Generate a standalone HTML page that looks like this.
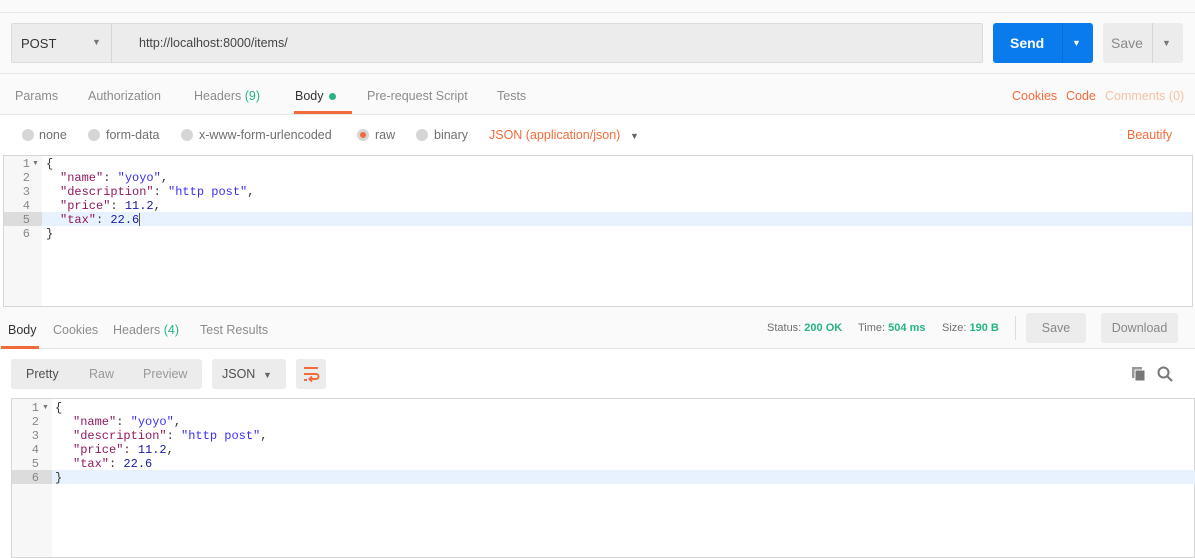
<!DOCTYPE html>
<html><head><style>
*{margin:0;padding:0;box-sizing:border-box}
body{width:1195px;height:557px;background:#fff;font-family:"Liberation Sans",sans-serif;font-size:12px;color:#505050;position:relative;overflow:hidden}
.a{position:absolute}
.mono{font-family:"Liberation Mono",monospace;font-size:12px;white-space:pre}
.k{color:#92185f}.s{color:#3b2ff5}.n{color:#1a1aa6}.p{color:#333}
.tab{position:absolute;top:89px;color:#8c8c8c;font-size:12.5px}
.rb{position:absolute;top:129px;width:12px;height:12px;border-radius:50%;background:#d6d6d6}
.rl{position:absolute;top:128px;color:#707070;font-size:12.5px}
.i{display:inline-block;width:14px}
.i2{display:inline-block;width:18px}
</style></head><body>
<div class="a" style="left:0;top:0;width:1195px;height:115px;background:#fafafa"></div>
<div class="a" style="left:0;top:12px;width:1195px;height:1px;background:#e6e6e6"></div>
<div class="a" style="left:11px;top:23px;width:972px;height:40px;background:#ececec;border:1px solid #dcdcdc;border-radius:2px"></div>
<div class="a" style="left:111px;top:23px;width:1px;height:40px;background:#d6d6d6"></div>
<div class="a" style="left:21px;top:36px;font-size:13px;color:#333">POST</div>
<div class="a" style="left:92px;top:37px;font-size:9px;color:#777">▼</div>
<div class="a" style="left:139px;top:36px;font-size:12.5px;color:#444">http://localhost:8000/items/</div>
<div class="a" style="left:993px;top:23px;width:100px;height:40px;background:#097bed;border-radius:3px"></div>
<div class="a" style="left:1062px;top:23px;width:1px;height:40px;background:#0a6fd4"></div>
<div class="a" style="left:1010px;top:35px;font-size:14px;font-weight:bold;color:#fff">Send</div>
<div class="a" style="left:1072px;top:38px;font-size:9px;color:#fff">▼</div>
<div class="a" style="left:1103px;top:23px;width:80px;height:40px;background:#ececec;border-radius:3px"></div>
<div class="a" style="left:1152px;top:23px;width:1px;height:40px;background:#d6d6d6"></div>
<div class="a" style="left:1111px;top:35px;font-size:14px;color:#888">Save</div>
<div class="a" style="left:1162px;top:38px;font-size:9px;color:#777">▼</div>
<div class="a" style="left:0;top:73px;width:1195px;height:1px;background:#e6e6e6"></div>
<div class="tab" style="left:15px">Params</div>
<div class="tab" style="left:88px">Authorization</div>
<div class="tab" style="left:194px">Headers <span style="color:#26b47f">(9)</span></div>
<div class="tab" style="left:295px;color:#333">Body <span style="display:inline-block;width:7px;height:7px;border-radius:50%;background:#26b47f;margin-left:2px"></span></div>
<div class="tab" style="left:367px">Pre-request Script</div>
<div class="tab" style="left:497px">Tests</div>
<div class="a" style="left:294px;top:111px;width:58px;height:3px;background:#f26b3a"></div>
<div class="tab" style="left:1012px;color:#f26b3a">Cookies</div>
<div class="tab" style="left:1066px;color:#f26b3a">Code</div>
<div class="tab" style="left:1105px;color:#f9c0a8">Comments (0)</div>
<div class="a" style="left:0;top:114px;width:1195px;height:1px;background:#e6e6e6"></div>
<div class="a" style="left:0;top:115px;width:1195px;height:41px;background:#fff"></div>
<div class="rb" style="left:22px"></div><div class="rl" style="left:39px">none</div>
<div class="rb" style="left:88px"></div><div class="rl" style="left:106px">form-data</div>
<div class="rb" style="left:181px"></div><div class="rl" style="left:199px">x-www-form-urlencoded</div>
<div class="rb" style="left:357px;background:#f26b3a;border:3px solid #d6d6d6"></div><div class="rl" style="left:375px">raw</div>
<div class="rb" style="left:416px"></div><div class="rl" style="left:434px">binary</div>
<div class="rl" style="left:489px;color:#f26b3a">JSON (application/json)</div>
<div class="a" style="left:630px;top:131px;font-size:9px;color:#666">▼</div>
<div class="rl" style="left:1127px;color:#f26b3a">Beautify</div>
<div class="a" style="left:3px;top:155px;width:1190px;height:152px;border:1px solid #d6d6d6;background:#fff"></div>
<div class="a" style="left:4px;top:156px;width:38px;height:150px;background:#f7f7f7"></div>
<div class="a" style="left:4px;top:212px;width:38px;height:14px;background:#dcdcdc"></div>
<div class="a" style="left:42px;top:212px;width:1150px;height:14px;background:#e8f2fe"></div>
<div class="a mono" style="left:0;top:157px;line-height:14px;color:#888"><div style="width:30px;text-align:right">1
2
3
4
5
6</div></div>
<div class="a" style="left:32px;top:160px;font-size:7px;color:#777">▼</div>
<div class="a mono" style="left:46px;top:157px;line-height:14px"><span class="p">{</span>
<span class="i"></span><span class="k">"name"</span><span class="p">: </span><span class="s">"yoyo"</span><span class="p">,</span>
<span class="i"></span><span class="k">"description"</span><span class="p">: </span><span class="s">"http post"</span><span class="p">,</span>
<span class="i"></span><span class="k">"price"</span><span class="p">: </span><span class="n">11.2</span><span class="p">,</span>
<span class="i"></span><span class="k">"tax"</span><span class="p">: </span><span class="n">22.6</span><span style="display:inline-block;width:1px;height:13px;background:#555;vertical-align:middle"></span>
<span class="p">}</span></div>
<div class="a" style="left:0;top:307px;width:1195px;height:41px;background:#fafafa"></div>
<div class="a" style="left:0;top:348px;width:1195px;height:1px;background:#e6e6e6"></div>
<div class="a" style="left:8px;top:323px;font-size:12.5px;color:#333">Body</div>
<div class="a" style="left:53px;top:323px;font-size:12.5px;color:#8c8c8c">Cookies</div>
<div class="a" style="left:113px;top:323px;font-size:12.5px;color:#8c8c8c">Headers <span style="color:#26b47f">(4)</span></div>
<div class="a" style="left:200px;top:323px;font-size:12.5px;color:#8c8c8c">Test Results</div>
<div class="a" style="left:1px;top:346px;width:38px;height:3px;background:#f26b3a"></div>
<div class="a" style="left:767px;top:322px;font-size:11px;color:#707070">Status: <b style="color:#26b47f">200 OK</b></div>
<div class="a" style="left:858px;top:322px;font-size:11px;color:#707070">Time: <b style="color:#26b47f">504 ms</b></div>
<div class="a" style="left:942px;top:322px;font-size:11px;color:#707070">Size: <b style="color:#26b47f">190 B</b></div>
<div class="a" style="left:1015px;top:316px;width:1px;height:24px;background:#ddd"></div>
<div class="a" style="left:1026px;top:313px;width:60px;height:30px;background:#ececec;border-radius:3px;text-align:center;line-height:30px;font-size:12.5px;color:#888">Save</div>
<div class="a" style="left:1101px;top:313px;width:77px;height:30px;background:#ececec;border-radius:3px;text-align:center;line-height:30px;font-size:12.5px;color:#888">Download</div>
<div class="a" style="left:11px;top:359px;width:191px;height:30px;background:#ececec;border-radius:3px"></div>
<div class="a" style="left:26px;top:367px;font-size:12.5px;color:#505050">Pretty</div>
<div class="a" style="left:89px;top:367px;font-size:12.5px;color:#999">Raw</div>
<div class="a" style="left:143px;top:367px;font-size:12.5px;color:#999">Preview</div>
<div class="a" style="left:212px;top:359px;width:74px;height:30px;background:#ececec;border-radius:3px"></div>
<div class="a" style="left:222px;top:367px;font-size:12.5px;color:#505050">JSON</div>
<div class="a" style="left:263px;top:370px;font-size:9px;color:#666">▼</div>
<div class="a" style="left:296px;top:359px;width:30px;height:30px;background:#ececec;border-radius:3px"></div>
<svg class="a" style="left:302px;top:365px" width="18" height="18" viewBox="0 0 18 18" fill="none" stroke="#f26b3a" stroke-width="2"><path d="M2 3H16M2 9H14a2.5 2.5 0 0 1 0 5H8M2 15H5M10 11.5L7.5 14L10 16.5"/></svg>
<svg class="a" style="left:1131px;top:366px" width="16" height="16" viewBox="0 0 16 16"><rect x="1" y="1" width="10" height="11" fill="#999"/><rect x="4" y="4" width="10" height="11" fill="#777" stroke="#fff"/></svg>
<svg class="a" style="left:1157px;top:366px" width="16" height="16" viewBox="0 0 16 16" fill="none" stroke="#777" stroke-width="2"><circle cx="6.5" cy="6.5" r="5"/><path d="M10 10L15 15"/></svg>
<div class="a" style="left:11px;top:398px;width:1184px;height:160px;border:1px solid #d6d6d6;background:#fff"></div>
<div class="a" style="left:12px;top:399px;width:40px;height:158px;background:#f7f7f7"></div>
<div class="a" style="left:12px;top:470px;width:40px;height:14px;background:#dcdcdc"></div>
<div class="a" style="left:52px;top:470px;width:1143px;height:14px;background:#e8f2fe"></div>
<div class="a mono" style="left:8px;top:401px;line-height:14px;color:#888"><div style="width:31px;text-align:right">1
2
3
4
5
6</div></div>
<div class="a" style="left:42px;top:404px;font-size:7px;color:#777">▼</div>
<div class="a mono" style="left:55px;top:401px;line-height:14px"><span class="p">{</span>
<span class="i2"></span><span class="k">"name"</span><span class="p">: </span><span class="s">"yoyo"</span><span class="p">,</span>
<span class="i2"></span><span class="k">"description"</span><span class="p">: </span><span class="s">"http post"</span><span class="p">,</span>
<span class="i2"></span><span class="k">"price"</span><span class="p">: </span><span class="n">11.2</span><span class="p">,</span>
<span class="i2"></span><span class="k">"tax"</span><span class="p">: </span><span class="n">22.6</span>
<span class="p">}</span></div>
</body></html>
